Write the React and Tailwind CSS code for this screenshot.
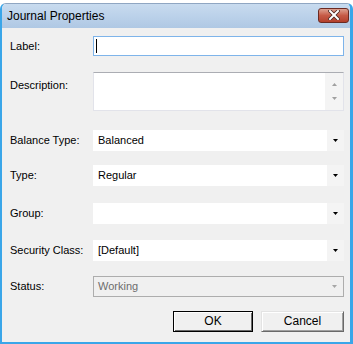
import React from 'react';

function Arrow({ color = '#000' }) {
    return (
        <svg width="5" height="3" viewBox="0 0 5 3">
            <path d="M0 0 H5 L2.5 3 Z" fill={color} />
        </svg>
    );
}

function Combo({ value, disabled }) {
    if (disabled) {
        return (
            <div className="flex h-[21px] items-center border border-[#adadad] bg-[#f0f0f0]">
                <span className="flex-1 pl-[4px] text-[#6d6d6d]">{value}</span>
                <div className="flex h-full w-[17px] items-center justify-center">
                    <Arrow color="#a6a6a6" />
                </div>
            </div>
        );
    }
    return (
        <div className="flex h-[21px] items-center bg-white">
            <span className="flex-1 pl-[5px]">{value}</span>
            <div className="flex h-full w-[17px] items-center justify-center bg-[#f4f4f4]">
                <Arrow />
            </div>
        </div>
    );
}

function Row({ label, children, className = '' }) {
    return (
        <div className={`grid grid-cols-[83px_1fr] items-center ${className}`}>
            <span>{label}</span>
            {children}
        </div>
    );
}

export default function App() {
    return (
        <div className="h-[344px] w-[353px] bg-white pt-[3px] font-['Liberation_Sans',Arial,sans-serif] text-[11px] leading-[13px] text-black">
            <div className="flex h-[341px] flex-col overflow-hidden rounded-t-[6px] border-b-2 border-l-2 border-r-[3px] border-t border-b-[#3aa6e9] border-l-[#3aa6e9] border-r-[#3aa6e9] border-t-[#8fa6c2]">
                {/* title bar */}
                <div className="flex h-[24px] items-center justify-between bg-gradient-to-b from-[#c8dbef] to-[#afc8e4] pl-[5px] pr-[1px]">
                    <span className="text-[12px] leading-[14px]">Journal Properties</span>
                    <div className="mb-[2px] flex h-[15px] w-[31px] items-center justify-center rounded-[3px] border border-[#6b2a22] bg-gradient-to-b from-[#dca090] via-[#c65a46] to-[#b3402c]">
                        <svg width="12" height="10" viewBox="0 0 12 10">
                            <path d="M2 1 L10 9 M10 1 L2 9" stroke="#4a2520" strokeWidth="3.6" strokeLinecap="square" />
                            <path d="M2 1 L10 9 M10 1 L2 9" stroke="#fff" strokeWidth="2" strokeLinecap="square" />
                        </svg>
                    </div>
                </div>

                {/* client */}
                <div className="flex flex-1 flex-col bg-[#f0f0f0] pl-[8px] pr-[6px]">
                    <Row label="Label:" className="mt-[8px]">
                        <div className="flex h-[20px] items-center border border-[#7eb4ea] bg-white pl-[2px]">
                            <span className="h-[14px] w-px bg-black" />
                        </div>
                    </Row>

                    <div className="mt-[16px] grid grid-cols-[83px_1fr]">
                        <span className="pt-[7px]">Description:</span>
                        <div className="flex h-[39px] border border-[#e2e3ea] border-t-[#abadb3] bg-white">
                            <div className="flex-1" />
                            <div className="flex w-[18px] flex-col items-center justify-between bg-[#f4f4f4] py-[10px]">
                                <svg width="5" height="3" viewBox="0 0 5 3">
                                    <path d="M0 3 H5 L2.5 0 Z" fill="#a0a0a0" />
                                </svg>
                                <Arrow color="#a0a0a0" />
                            </div>
                        </div>
                    </div>

                    <Row label="Balance Type:" className="mt-[19px]">
                        <Combo value="Balanced" />
                    </Row>
                    <Row label="Type:" className="mt-[14px]">
                        <Combo value="Regular" />
                    </Row>
                    <Row label="Group:" className="mt-[17px]">
                        <Combo value="" />
                    </Row>
                    <Row label="Security Class:" className="mt-[16px]">
                        <Combo value="[Default]" />
                    </Row>
                    <Row label="Status:" className="mt-[15px]">
                        <Combo value="Working" disabled />
                    </Row>

                    <div className="mt-[14px] flex justify-end gap-[8px] text-[12px]">
                        <button className="flex h-[21px] w-[80px] items-center justify-center border border-black bg-[#f0f0f0] shadow-[inset_1px_1px_0_#fff,inset_-1px_-1px_0_#696969]">
                            OK
                        </button>
                        <button className="flex h-[21px] w-[83px] items-center justify-center border border-[#e3e3e3] border-b-[#696969] border-r-[#696969] bg-[#f0f0f0] shadow-[inset_1px_1px_0_#fff,inset_-1px_-1px_0_#a0a0a0]">
                            Cancel
                        </button>
                    </div>
                </div>
            </div>
        </div>
    );
}
